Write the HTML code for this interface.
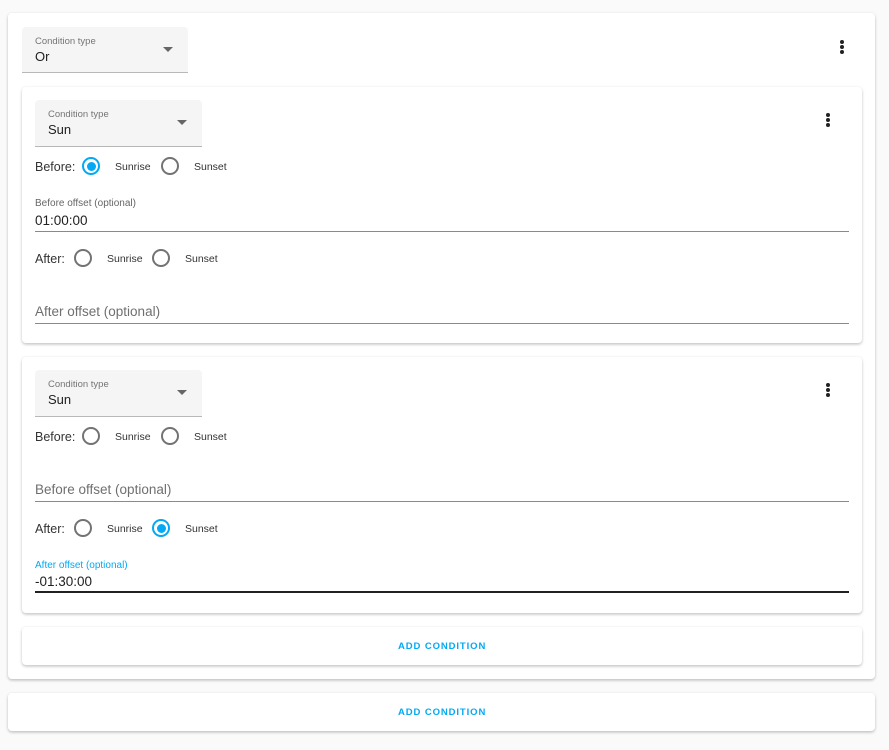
<!DOCTYPE html>
<html><head><meta charset="utf-8">
<style>
*{box-sizing:border-box;margin:0;padding:0}
body{width:889px;height:750px;background:#fafafa;position:relative;overflow:hidden;font-family:"Liberation Sans",Roboto,sans-serif;color:#212121}
.a{position:absolute;white-space:nowrap}
.card{position:absolute;background:#fff;border-radius:4px;box-shadow:0 1px 3px rgba(0,0,0,.18),0 2px 2px rgba(0,0,0,.08)}
.dd{position:absolute;background:#f5f5f5;border-bottom:1px solid #b8b8b8;border-radius:4px 4px 0 0}
.dd .l{position:absolute;left:13px;top:9px;font-size:9.5px;color:#757575}
.dd .v{position:absolute;left:13px;top:22px;font-size:13px;color:#212121}
.dd .ar{position:absolute;right:15px;top:20px;width:0;height:0;border-left:5px solid transparent;border-right:5px solid transparent;border-top:5px solid #666}
.dots{position:absolute;width:4px}
.dots i{display:block;width:4px;height:4px;border-radius:50%;background:#222;margin-bottom:1px}
.rad{position:absolute;width:18px;height:18px;border:2px solid #737373;border-radius:50%}
.rad.on{border-color:#03a9f4}
.rad.on:after{content:"";position:absolute;left:2.5px;top:2.5px;width:9px;height:9px;border-radius:50%;background:#03a9f4}
.lab{font-size:12.5px;color:#333}
.sm{font-size:10.5px;color:#333}
.line{position:absolute;left:35px;width:814px;height:1px;background:#8a8a8a}
.btn{font-size:9.5px;font-weight:bold;letter-spacing:0.9px;color:#03a9f4}
</style></head><body>

<div class="card" style="left:8px;top:13px;width:867px;height:666px"></div>

<div class="dd" style="left:22px;top:27px;width:166px;height:46px"><span class="l">Condition type</span><span class="v">Or</span><span class="ar"></span></div>
<div class="dots" style="left:840px;top:40px"><i></i><i></i><i></i></div>

<!-- card 1 -->
<div class="card" style="left:22px;top:87px;width:840px;height:256px"></div>
<div class="dd" style="left:35px;top:100px;width:167px;height:47px"><span class="l">Condition type</span><span class="v">Sun</span><span class="ar"></span></div>
<div class="dots" style="left:826px;top:113px"><i></i><i></i><i></i></div>
<div class="a lab" style="left:35px;top:160px">Before:</div>
<div class="rad on" style="left:82px;top:157px"></div>
<div class="a sm" style="left:115px;top:161px">Sunrise</div>
<div class="rad" style="left:161px;top:157px"></div>
<div class="a sm" style="left:194px;top:161px">Sunset</div>
<div class="a" style="left:35px;top:198px;font-size:10px;color:#666">Before offset (optional)</div>
<div class="a" style="left:35px;top:213px;font-size:13.5px">01:00:00</div>
<div class="line" style="top:231px"></div>
<div class="a lab" style="left:35px;top:252px">After:</div>
<div class="rad" style="left:74px;top:249px"></div>
<div class="a sm" style="left:107px;top:253px">Sunrise</div>
<div class="rad" style="left:152px;top:249px"></div>
<div class="a sm" style="left:185px;top:253px">Sunset</div>
<div class="a" style="left:35px;top:304px;font-size:13.5px;color:#6f6f6f">After offset (optional)</div>
<div class="line" style="top:323px"></div>

<!-- card 2 -->
<div class="card" style="left:22px;top:357px;width:840px;height:256px"></div>
<div class="dd" style="left:35px;top:370px;width:167px;height:47px"><span class="l">Condition type</span><span class="v">Sun</span><span class="ar"></span></div>
<div class="dots" style="left:826px;top:383px"><i></i><i></i><i></i></div>
<div class="a lab" style="left:35px;top:430px">Before:</div>
<div class="rad" style="left:82px;top:427px"></div>
<div class="a sm" style="left:115px;top:431px">Sunrise</div>
<div class="rad" style="left:161px;top:427px"></div>
<div class="a sm" style="left:194px;top:431px">Sunset</div>
<div class="a" style="left:35px;top:482px;font-size:13.5px;color:#6f6f6f">Before offset (optional)</div>
<div class="line" style="top:501px"></div>
<div class="a lab" style="left:35px;top:522px">After:</div>
<div class="rad" style="left:74px;top:519px"></div>
<div class="a sm" style="left:107px;top:523px">Sunrise</div>
<div class="rad on" style="left:152px;top:519px"></div>
<div class="a sm" style="left:185px;top:523px">Sunset</div>
<div class="a" style="left:35px;top:560px;font-size:10px;color:#03a9f4">After offset (optional)</div>
<div class="a" style="left:35px;top:574px;font-size:13.5px">-01:30:00</div>
<div class="line" style="top:591px;height:2px;background:#212121"></div>

<!-- add buttons -->
<div class="card" style="left:22px;top:627px;width:840px;height:38px"></div>
<div class="a btn" style="left:398px;top:641px">ADD CONDITION</div>
<div class="card" style="left:8px;top:693px;width:867px;height:38px"></div>
<div class="a btn" style="left:398px;top:707px">ADD CONDITION</div>

</body></html>
